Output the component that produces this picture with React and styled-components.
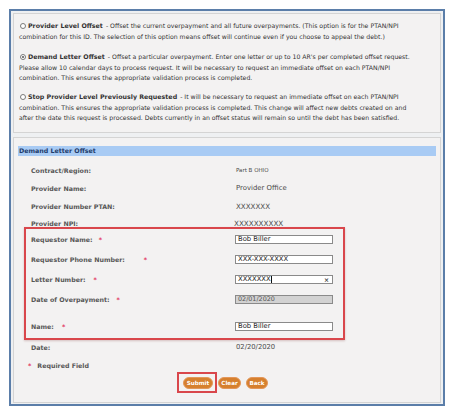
import React from 'react';
import styled, { createGlobalStyle } from 'styled-components';

const Global = createGlobalStyle`
  html, body { margin: 0; padding: 0; background: #ffffff; }
  body { font-family: "DejaVu Sans", Verdana, sans-serif; }
  * { box-sizing: border-box; }
`;

const Frame = styled.div`
  margin: 9px 0 0 9px;
  width: 436px;
  height: 397px;
  border: 2px solid #5b7ea9;
  background: #eef0f2;
  padding: 2px 2px 1px 2px;
  display: flex;
  flex-direction: column;
  gap: 4px;
`;

const Panel = styled.div`
  border: 1px solid #d4d4d4;
  background: #f3f2f2;
  ${p => (p.$grow ? 'flex: 1;' : `height: ${p.$h}px;`)}
`;

const OptionsPanel = styled(Panel)`
  padding: 6px 4px 0 5px;
  color: #333;
`;

const Option = styled.div`
  margin-top: ${p => p.$mt || 0}px;
  font-size: 6.2px;
  line-height: 10px;
  white-space: nowrap;
`;

const OptionHead = styled.div`
  display: flex;
  align-items: center;
  height: 12px;
`;

const Radio = styled.span`
  width: 6px;
  height: 6px;
  margin: 0 2px 0 1px;
  border: 1px solid #7a7a7a;
  border-radius: 50%;
  background: #fff;
  display: inline-flex;
  align-items: center;
  justify-content: center;
  flex: none;
  &::after {
    content: '';
    width: 2.5px;
    height: 2.5px;
    border-radius: 50%;
    background: ${p => (p.$checked ? '#555' : 'transparent')};
  }
`;

const Strong = styled.b`
  font-weight: bold;
  font-size: 6.3px;
  margin-right: 3px;
`;

const FormPanel = styled(Panel)`
  padding: 8px 4px 0 4px;
  display: flex;
  flex-direction: column;
`;

const SectionHeader = styled.div`
  height: 10px;
  background: #a8cbf4;
  color: #1f3c6b;
  font-weight: bold;
  font-size: 6.3px;
  line-height: 10px;
  padding-left: 1px;
`;

const FormBody = styled.div`
  padding-left: 6px;
  margin-top: 5px;
  display: flex;
  flex-direction: column;
`;

const Row = styled.div`
  display: grid;
  grid-template-columns: 204px 1fr;
  align-items: center;
  height: ${p => p.$h || 18}px;
  margin-top: ${p => p.$mt || 0}px;
  padding-left: ${p => (p.$inBox ? 5 : 7)}px;
`;

const Label = styled.div`
  font-size: 6.3px;
  font-weight: bold;
  color: #575757;
  white-space: nowrap;
  display: flex;
  align-items: center;
`;

const Star = styled.span`
  color: #e2335d;
  font-weight: bold;
  margin-left: ${p => p.$gap || 6}px;
`;

const Value = styled.div`
  font-size: ${p => p.$size || 6.8}px;
  color: #4a4a4a;
  white-space: nowrap;
  margin-left: ${p => p.$shift || 1}px;
`;

const RedBox = styled.div`
  width: 321px;
  margin-top: -4px;
  border: 2px solid #d9474c;
  box-shadow: 0 1px 2px rgba(120, 40, 40, 0.25);
  padding: 0 0 2px 0;
  display: flex;
  flex-direction: column;
`;

const Input = styled.input`
  width: 98px;
  height: 9px;
  border: 1px solid #8a8a8a;
  background: ${p => (p.disabled ? '#d2d2d2' : '#ffffff')};
  color: ${p => (p.disabled ? '#555' : '#222')};
  font-family: "DejaVu Sans", Verdana, sans-serif;
  font-size: ${p => (p.disabled ? 6.4 : 6.8)}px;
  padding: 0 2px;
  margin: 0;
  outline: none;
  -webkit-text-fill-color: ${p => (p.disabled ? '#555' : '#222')};
  opacity: 1;
`;

const FieldBox = styled.div`
  width: 98px;
  height: 9px;
  border: 1px solid #8a8a8a;
  background: #ffffff;
  display: flex;
  align-items: center;
  padding: 0 3px 0 2px;
  font-size: 6.8px;
  color: #222;
`;

const Caret = styled.span`
  width: 1px;
  height: 7px;
  background: #111;
`;

const ClearX = styled.span`
  margin-left: auto;
  font-size: 6px;
  color: #333;
  font-weight: bold;
`;

const RequiredRow = styled.div`
  height: 14px;
  margin-top: 4px;
  display: flex;
  align-items: center;
  padding-left: 10px;
  font-size: 6.3px;
  font-weight: bold;
  color: #575757;
`;

const RequiredStar = styled.span`
  color: #e2335d;
  margin-right: 6px;
`;

const Buttons = styled.div`
  display: flex;
  justify-content: center;
  align-items: center;
  padding-right: 9px;
`;

const SubmitFrame = styled.div`
  border: 2px solid #d9474c;
  padding: 3px 2px 2px 4px;
  margin-right: 1px;
  display: flex;
`;

const Button = styled.button`
  height: 12px;
  width: ${p => p.$w}px;
  margin-left: ${p => p.$ml || 0}px;
  padding: 0;
  border: 1px solid #e3975a;
  border-radius: 6px;
  background: #d6802e;
  color: #ffffff;
  font-family: "DejaVu Sans", Verdana, sans-serif;
  font-weight: bold;
  font-size: 5.6px;
  line-height: 10px;
  cursor: pointer;
`;

export default function App() {
  return (
    <>
      <Global />
      <Frame>
        <OptionsPanel $h={120}>
          <Option>
            <OptionHead>
              <Radio />
              <Strong>Provider Level Offset</Strong>
              <span>- Offset the current overpayment and all future overpayments. (This option is for the PTAN/NPI</span>
            </OptionHead>
            <div>combination for this ID. The selection of this option means offset will continue even if you choose to appeal the debt.)</div>
          </Option>
          <Option $mt={9}>
            <OptionHead>
              <Radio $checked />
              <Strong>Demand Letter Offset</Strong>
              <span>- Offset a particular overpayment. Enter one letter or up to 10 AR's per completed offset request.</span>
            </OptionHead>
            <div>Please allow 10 calendar days to process request. It will be necessary to request an immediate offset on each PTAN/NPI</div>
            <div>combination. This ensures the appropriate validation process is completed.</div>
          </Option>
          <Option $mt={8}>
            <OptionHead>
              <Radio />
              <Strong>Stop Provider Level Previously Requested</Strong>
              <span>- It will be necessary to request an immediate offset on each PTAN/NPI</span>
            </OptionHead>
            <div>combination. This ensures the appropriate validation process is completed. This change will affect new debts created on and</div>
            <div>after the date this request is processed. Debts currently in an offset status will remain so until the debt has been satisfied.</div>
          </Option>
        </OptionsPanel>

        <FormPanel $grow>
          <SectionHeader>Demand Letter Offset</SectionHeader>
          <FormBody>
            <Row>
              <Label>Contract/Region:</Label>
              <Value $size={5.5}>Part B OHIO</Value>
            </Row>
            <Row>
              <Label>Provider Name:</Label>
              <Value $size={6.9}>Provider Office</Value>
            </Row>
            <Row>
              <Label>Provider Number PTAN:</Label>
              <Value $size={7.1}>XXXXXXX</Value>
            </Row>
            <Row $h={16}>
              <Label>Provider NPI:</Label>
              <Value $size={7.2} $shift={-1}>XXXXXXXXXX</Value>
            </Row>

            <RedBox>
              <Row $inBox $h={20}>
                <Label>Requestor Name:<Star $gap={6}>*</Star></Label>
                <Input readOnly value="Bob Biller" />
              </Row>
              <Row $inBox $h={20}>
                <Label>Requestor Phone Number:<Star $gap={19}>*</Star></Label>
                <Input readOnly value="XXX-XXX-XXXX" />
              </Row>
              <Row $inBox $h={20}>
                <Label>Letter Number:<Star $gap={8}>*</Star></Label>
                <FieldBox>
                  <span>XXXXXXX</span>
                  <Caret />
                  <ClearX>×</ClearX>
                </FieldBox>
              </Row>
              <Row $inBox $h={20}>
                <Label>Date of Overpayment:<Star $gap={7}>*</Star></Label>
                <Input disabled value="02/01/2020" readOnly />
              </Row>
              <Row $inBox $h={20} $mt={7}>
                <Label>Name:<Star $gap={8}>*</Star></Label>
                <Input readOnly value="Bob Biller" />
              </Row>
            </RedBox>

            <Row $h={14}>
              <Label>Date:</Label>
              <Value $size={6.8}>02/20/2020</Value>
            </Row>
          </FormBody>
          <RequiredRow>
            <RequiredStar>*</RequiredStar>
            Required Field
          </RequiredRow>
          <Buttons>
            <SubmitFrame>
              <Button $w={30}>Submit</Button>
            </SubmitFrame>
            <Button $w={23}>Clear</Button>
            <Button $w={22} $ml={5}>Back</Button>
          </Buttons>
        </FormPanel>
      </Frame>
    </>
  );
}
